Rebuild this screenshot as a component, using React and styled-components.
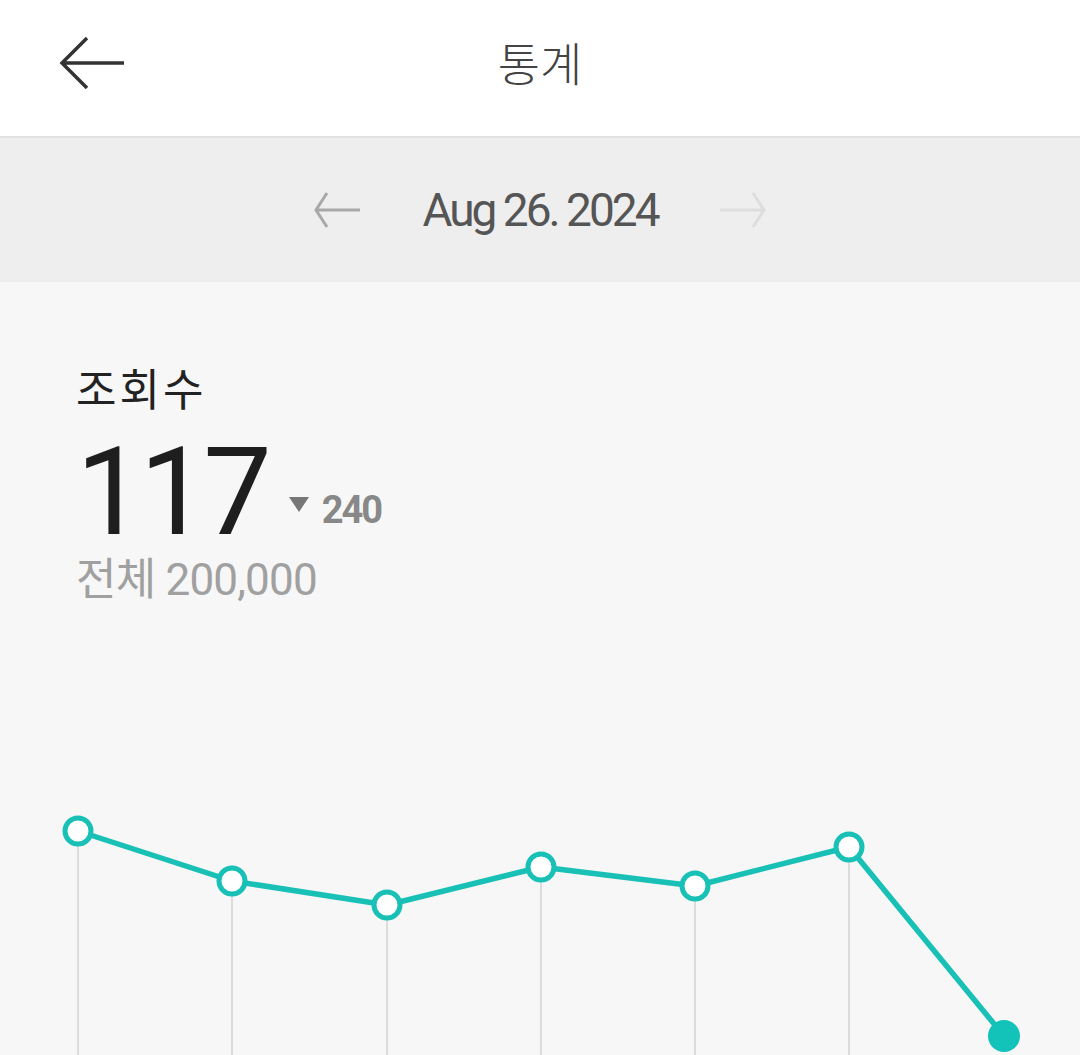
import styled, { createGlobalStyle } from "styled-components";

const GlobalStyle = createGlobalStyle`
  html, body {
    margin: 0;
    padding: 0;
    background: #f7f7f7;
  }
  body {
    font-family: Roboto, "Noto Sans CJK KR", sans-serif;
    overflow: hidden;
  }
`;

const Page = styled.div`
  width: 1080px;
  height: 1055px;
  display: flex;
  flex-direction: column;
  overflow: hidden;
  background: #f7f7f7;
`;

const Header = styled.header`
  height: 136px;
  flex-shrink: 0;
  background: #ffffff;
  border-bottom: 2px solid #e2e2e2;
  display: grid;
  grid-template-columns: 200px 1fr 200px;
  align-items: center;
`;

const BackButton = styled.button`
  width: 80px;
  height: 60px;
  margin-left: 59px;
  margin-top: -10px;
  padding: 0;
  border: none;
  background: none;
  display: flex;
  align-items: center;
  justify-content: flex-start;
`;

const Title = styled.h1`
  margin: 0 0 14px;
  text-align: center;
  font-family: "Noto Sans CJK KR", sans-serif;
  font-weight: 300;
  font-size: 46px;
  color: #444444;
`;

const DateBar = styled.div`
  height: 144px;
  flex-shrink: 0;
  background: #eeeeee;
  display: flex;
  align-items: center;
  justify-content: center;
  gap: 62px;
`;

const DateText = styled.span`
  font-family: Roboto, sans-serif;
  font-size: 46px;
  letter-spacing: -3px;
  color: #555555;
  line-height: 1;
`;

const ArrowButton = styled.button`
  padding: 0;
  border: none;
  background: none;
  display: flex;
  align-items: center;
  color: ${(p) => (p.$disabled ? "#dddddd" : "#a8a8a8")};
`;

const Stats = styled.section`
  padding: 80px 76px 0;
  display: flex;
  flex-direction: column;
`;

const Label = styled.div`
  font-family: "Noto Sans CJK KR", sans-serif;
  font-size: 44px;
  line-height: 50px;
  letter-spacing: 3px;
  color: #222222;
`;

const ValueRow = styled.div`
  margin-top: 20px;
  display: flex;
  align-items: flex-end;
  gap: 22px;
`;

const BigValue = styled.span`
  font-family: Roboto, sans-serif;
  font-size: 122px;
  line-height: 1;
  color: #1e1e1e;
  letter-spacing: -5px;
`;

const Change = styled.span`
  display: flex;
  align-items: center;
  gap: 13px;
  margin-bottom: 25px;
  font-family: Roboto, sans-serif;
  font-weight: 700;
  font-size: 38px;
  line-height: 1;
  letter-spacing: -2px;
  color: #888888;
`;

const Triangle = styled.span`
  width: 0;
  height: 0;
  border-left: 10px solid transparent;
  border-right: 10px solid transparent;
  border-top: 15px solid #777777;
  margin-top: -12px;
`;

const Total = styled.div`
  font-size: 44px;
  line-height: 52px;
  letter-spacing: -0.8px;
  color: #a0a0a0;
`;

const Chart = styled.svg`
  margin-top: auto;
  display: block;
  flex-shrink: 0;
  overflow: visible;
`;

const points = [
  [78, 31],
  [232, 81],
  [387, 105],
  [541, 67],
  [695, 86],
  [849, 47],
  [1004, 236],
];

function BackArrow() {
  return (
    <svg width="66" height="52" viewBox="0 0 66 52" fill="none">
      <path
        d="M65 26H3M28 1L3 26L28 51"
        stroke="#333333"
        strokeWidth="3.5"
      />
    </svg>
  );
}

function Thin({ dir }) {
  const d = dir === "left" ? "M46 19H2M13 2L2 19L13 36" : "M0 19H44M33 2L44 19L33 36";
  return (
    <svg width="46" height="38" viewBox="0 0 46 38" fill="none">
      <path d={d} stroke="currentColor" strokeWidth="3" />
    </svg>
  );
}

export default function App() {
  const line = points.map((p) => p.join(",")).join(" ");
  return (
    <Page>
      <GlobalStyle />
      <Header>
        <BackButton aria-label="back">
          <BackArrow />
        </BackButton>
        <Title>통계</Title>
        <div />
      </Header>
      <DateBar>
        <ArrowButton aria-label="previous day">
          <Thin dir="left" />
        </ArrowButton>
        <DateText>Aug 26. 2024</DateText>
        <ArrowButton $disabled aria-label="next day">
          <Thin dir="right" />
        </ArrowButton>
      </DateBar>
      <Stats>
        <Label>조회수</Label>
        <ValueRow>
          <BigValue>117</BigValue>
          <Change>
            <Triangle />
            240
          </Change>
        </ValueRow>
        <Total>전체 200,000</Total>
      </Stats>
      <Chart width="1080" height="255" viewBox="0 0 1080 255">
        {points.slice(0, 6).map(([x, y]) => (
          <line key={x} x1={x} y1={y} x2={x} y2={260} stroke="#dcdcdc" strokeWidth="2" />
        ))}
        <polyline points={line} fill="none" stroke="#18c0b6" strokeWidth="5.5" strokeLinejoin="round" />
        {points.slice(0, 6).map(([x, y]) => (
          <circle key={x} cx={x} cy={y} r="13" fill="#ffffff" stroke="#18c0b6" strokeWidth="5" />
        ))}
        <circle cx={points[6][0]} cy={points[6][1]} r="16" fill="#13c2b8" />
      </Chart>
    </Page>
  );
}
